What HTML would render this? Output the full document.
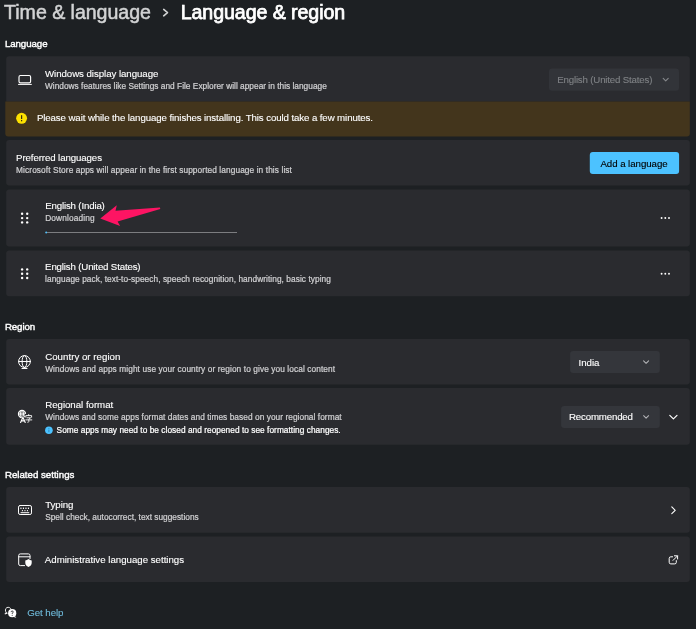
<!DOCTYPE html>
<html><head><meta charset="utf-8"><title>Language &amp; region</title><style>
html,body{margin:0;padding:0;}
body{width:696px;height:629px;overflow:hidden;background:#1d2023;position:relative;font-family:"Liberation Sans",sans-serif;}
svg{position:absolute;left:0;top:0;}
#tx{position:absolute;left:0;top:0;width:696px;height:629px;will-change:transform;}
.t{position:absolute;white-space:nowrap;line-height:1;}
</style></head><body>
<svg width="696" height="629" viewBox="0 0 696 629">
<path d="M6.2 101.5 V59.2 a3 3 0 0 1 3 -3 H686.8 a3 3 0 0 1 3 3 V101.5 Z" fill="#2a2b2f"/>
<path d="M5.3 101.5 H689.8 V133.5 a3 3 0 0 1 -3 3 H8.3 a3 3 0 0 1 -3 -3 Z" fill="#43351c"/>
<rect x="6.2" y="140" width="683.5999999999999" height="45.5" rx="3" fill="#2a2b2f" />
<rect x="6.2" y="189.5" width="683.5999999999999" height="57.0" rx="3" fill="#2a2b2f" />
<rect x="6.2" y="250.5" width="683.5999999999999" height="45.80000000000001" rx="3" fill="#2a2b2f" />
<rect x="6.2" y="339" width="683.5999999999999" height="45.5" rx="3" fill="#2a2b2f" />
<rect x="6.2" y="388" width="683.5999999999999" height="56.80000000000001" rx="3" fill="#2a2b2f" />
<rect x="6.2" y="487" width="683.5999999999999" height="45.799999999999955" rx="3" fill="#2a2b2f" />
<rect x="6.2" y="536.5" width="683.5999999999999" height="45.5" rx="3" fill="#2a2b2f" />
<rect x="549" y="68.6" width="130" height="22.2" rx="3.2" fill="#323439" />
<rect x="570.1" y="351.0" width="89.7" height="21.9" rx="3.2" fill="#34363b" />
<rect x="561.1" y="406.1" width="98.7" height="21.8" rx="3.2" fill="#34363b" />
<rect x="589.8" y="152" width="89.3" height="22" rx="3" fill="#4cc2ff" />
<rect x="45.5" y="232.05" width="191.5" height="0.9" fill="#86878b"/>
<rect x="45.3" y="231.6" width="1.8" height="1.8" rx="0.9" fill="#4cc2ff"/>
<polygon points="100.3,218.4 116.8,205.2 115.5,210.7 159.9,207.5 160.3,208.9 117.6,221.5 120.1,226.1" fill="#fd1463"/>
<circle cx="22.1" cy="213.80" r="1.2" fill="#fff"/>
<circle cx="27.2" cy="213.80" r="1.2" fill="#fff"/>
<circle cx="22.1" cy="218.10" r="1.2" fill="#fff"/>
<circle cx="27.2" cy="218.10" r="1.2" fill="#fff"/>
<circle cx="22.1" cy="222.40" r="1.2" fill="#fff"/>
<circle cx="27.2" cy="222.40" r="1.2" fill="#fff"/>
<circle cx="22.1" cy="269.40" r="1.2" fill="#fff"/>
<circle cx="27.2" cy="269.40" r="1.2" fill="#fff"/>
<circle cx="22.1" cy="273.70" r="1.2" fill="#fff"/>
<circle cx="27.2" cy="273.70" r="1.2" fill="#fff"/>
<circle cx="22.1" cy="278.00" r="1.2" fill="#fff"/>
<circle cx="27.2" cy="278.00" r="1.2" fill="#fff"/>
<circle cx="661.6" cy="218.0" r="0.95" fill="#fff"/>
<circle cx="665.3000000000001" cy="218.0" r="0.95" fill="#fff"/>
<circle cx="669.0" cy="218.0" r="0.95" fill="#fff"/>
<circle cx="661.6" cy="273.7" r="0.95" fill="#fff"/>
<circle cx="665.3000000000001" cy="273.7" r="0.95" fill="#fff"/>
<circle cx="669.0" cy="273.7" r="0.95" fill="#fff"/>
<circle cx="21.6" cy="118.3" r="5.45" fill="#fce100"/>
<rect x="21.0" y="115.2" width="1.2" height="3.8" fill="#3a2d10"/><rect x="21.0" y="120.0" width="1.2" height="1.3" fill="#3a2d10"/>
<circle cx="48.9" cy="430.2" r="3.8" fill="#4cc2ff"/>
<rect x="48.5" y="429.6" width="0.8" height="2.6" fill="#2a7fae"/><rect x="48.5" y="428" width="0.8" height="0.9" fill="#2a7fae"/>
<rect x="19" y="75.5" width="11.6" height="7.4" rx="1.4" fill="none" stroke="#fff" stroke-width="1" stroke-linecap="round" stroke-linejoin="round" style="stroke-width:1.15"/><path d="M18.5 84.4 H31.4" fill="none" stroke="#fff" stroke-width="1" stroke-linecap="round" stroke-linejoin="round"/>
<circle cx="24.5" cy="361.5" r="5.9" fill="none" stroke="#fff" stroke-width="1" stroke-linecap="round" stroke-linejoin="round"/><ellipse cx="24.5" cy="361.5" rx="2.4" ry="5.9" fill="none" stroke="#fff" stroke-width="1" stroke-linecap="round" stroke-linejoin="round"/><path d="M18.6 361.5 H30.4 M24.5 367.4 V368.4 M22 368.5 H27" fill="none" stroke="#fff" stroke-width="1" stroke-linecap="round" stroke-linejoin="round"/>
<circle cx="22.0" cy="414.0" r="3.6" fill="rgba(255,255,255,0.35)" stroke="#fff" stroke-width="1.1"/><ellipse cx="22.0" cy="414.0" rx="1.5" ry="3.6" fill="none" stroke="#fff" stroke-width="0.9" stroke-linecap="round" stroke-linejoin="round"/><path d="M18.4 414.0 H25.6" fill="none" stroke="#fff" stroke-width="0.9" stroke-linecap="round" stroke-linejoin="round"/>
<path d="M20.6 422.6 L22.9 417.2 L25.2 422.6 Z" fill="#2a2b2f" stroke="#2a2b2f" stroke-width="1.8" stroke-linejoin="round"/>
<rect x="24.9" y="413.9" width="7.6" height="9.2" fill="#2a2b2f"/>
<path d="M20.6 422.5 L22.9 417.2 L25.2 422.5 M21.5 420.9 H24.3" fill="none" stroke="#fff" stroke-width="1.15" stroke-linejoin="round" stroke-linecap="round"/>
<path d="M28.7 414.5 V415.4 M25.8 417.2 V415.6 H31.6 V417.2 M27 417.8 H30.6 L28.8 419.3 V421.6 Q28.8 422.4 27.8 422.3 M25.8 419.9 H31.8" fill="none" stroke="#fff" stroke-width="0.9" stroke-linecap="round" stroke-linejoin="round"/>
<rect x="18.5" y="505.5" width="13" height="9" rx="1.6" fill="none" stroke="#fff" stroke-width="1" stroke-linecap="round" stroke-linejoin="round"/>
<g fill="#fff"><rect x="20.4" y="507.6" width="1.1" height="1.4"/><rect x="22.9" y="507.6" width="1.1" height="1.4"/><rect x="25.4" y="507.6" width="1.1" height="1.4"/><rect x="27.9" y="507.6" width="1.1" height="1.4"/><rect x="21.9" y="510.1" width="1.1" height="1.1"/><rect x="24.4" y="510.1" width="1.1" height="1.1"/><rect x="26.9" y="510.1" width="1.1" height="1.1"/><rect x="20.6" y="512.2" width="8.6" height="1"/></g>
<path d="M24.6 565.6 H20.3 a1.6 1.6 0 0 1 -1.6 -1.6 V555.5 a1.6 1.6 0 0 1 1.6 -1.6 H28.4 a1.6 1.6 0 0 1 1.6 1.6 V558.6 M18.7 556.8 H30" fill="none" stroke="#fff" stroke-width="1" stroke-linecap="round" stroke-linejoin="round"/>
<path d="M28.5 559.1 C27.4 560 26.3 560.3 25.3 560.4 V563 C25.3 565 26.7 566.2 28.5 567 C30.3 566.2 31.7 565 31.7 563 V560.4 C30.7 560.3 29.6 560 28.5 559.1 Z" fill="#fff"/>
<path d="M6.2 612.4 A3.0 3.0 0 1 1 11.2 609.5 M6.2 612.4 L4.9 614.0 L7.2 613.3" fill="none" stroke="#fff" stroke-width="0.9" stroke-linecap="round" stroke-linejoin="round"/>
<circle cx="12.2" cy="613.2" r="4.1" fill="#fff"/><path d="M14.8 616.1 L16.4 617.7 L13.6 617.1 Z" fill="#fff"/>
<path d="M11.1 612.1 Q11.1 611.0 12.2 611.0 Q13.3 611.0 13.3 612.0 Q13.3 612.7 12.2 613.3 V614.0" fill="none" stroke="#1d2023" stroke-width="0.8"/><circle cx="12.2" cy="615.3" r="0.5" fill="#1d2023"/>
<path d="M663.2 78.3 L665.7 80.8 L668.2 78.3" fill="none" stroke="#85878b" stroke-width="1.15" stroke-linecap="round" stroke-linejoin="round"/>
<path d="M643.6 360.8 L646.1 363.3 L648.6 360.8" fill="none" stroke="#b4b5b8" stroke-width="1.05" stroke-linecap="round" stroke-linejoin="round"/>
<path d="M643.6 415.7 L646.1 418.2 L648.6 415.7" fill="none" stroke="#b4b5b8" stroke-width="1.05" stroke-linecap="round" stroke-linejoin="round"/>
<path d="M669.8 415.3 L673.4 418.9 L677 415.3" fill="none" stroke="#fff" stroke-width="1.2" stroke-linecap="round" stroke-linejoin="round"/>
<path d="M671.8 506.9 L675.2 510.3 L671.8 513.7" fill="none" stroke="#fff" stroke-width="1.1" stroke-linecap="round" stroke-linejoin="round"/>
<path d="M163.7 9.4 L167.5 12.6 L163.7 15.8" fill="none" stroke="#d2d3d4" stroke-width="1.6" stroke-linecap="round" stroke-linejoin="round"/>
<path d="M672.6 556.8 H670.8 a1.6 1.6 0 0 0 -1.6 1.6 V562.3 a1.6 1.6 0 0 0 1.6 1.6 H674.7 a1.6 1.6 0 0 0 1.6 -1.6 V560.6 M674.4 555.8 H677.6 V559 M677.4 556 L673 560.4" fill="none" stroke="#fff" stroke-width="1" stroke-linecap="round" stroke-linejoin="round"/>
</svg>
<div id="tx">
<div class="t" style="left:4.10px;top:3.21px;font-size:19.6px;color:#d2d3d4;letter-spacing:-0.04px;-webkit-text-stroke:0.5px #d2d3d4">Time &amp; language</div>
<div class="t" style="left:180.70px;top:3.21px;font-size:19.6px;color:#ffffff;letter-spacing:-0.071px;-webkit-text-stroke:0.75px #ffffff">Language &amp; region</div>
<div class="t" style="left:4.90px;top:39.39px;font-size:9.7px;color:#ffffff;letter-spacing:-0.064px;-webkit-text-stroke:0.4px #ffffff">Language</div>
<div class="t" style="left:45.00px;top:69.19px;font-size:9.7px;color:#ffffff;letter-spacing:-0.059px;-webkit-text-stroke:0.12px #ffffff">Windows display language</div>
<div class="t" style="left:45.00px;top:81.77px;font-size:8.3px;color:#d0d0d2;letter-spacing:0.018px;-webkit-text-stroke:0.22px #d0d0d2">Windows features like Settings and File Explorer will appear in this language</div>
<div class="t" style="left:557.20px;top:74.99px;font-size:9.7px;color:#7e8084;letter-spacing:-0.173px;-webkit-text-stroke:0.12px #7e8084">English (United States)</div>
<div class="t" style="left:36.90px;top:113.39px;font-size:9.7px;color:#ffffff;letter-spacing:-0.103px;-webkit-text-stroke:0.12px #ffffff">Please wait while the language finishes installing. This could take a few minutes.</div>
<div class="t" style="left:16.10px;top:153.19px;font-size:9.7px;color:#ffffff;letter-spacing:-0.105px;-webkit-text-stroke:0.12px #ffffff">Preferred languages</div>
<div class="t" style="left:16.10px;top:165.77px;font-size:8.3px;color:#d0d0d2;letter-spacing:0.097px;-webkit-text-stroke:0.22px #d0d0d2">Microsoft Store apps will appear in the first supported language in this list</div>
<div class="t" style="left:600.40px;top:159.19px;font-size:9.7px;color:#000000;letter-spacing:-0.048px;-webkit-text-stroke:0.12px #000000">Add a language</div>
<div class="t" style="left:45.20px;top:201.09px;font-size:9.7px;color:#ffffff;letter-spacing:-0.163px;-webkit-text-stroke:0.12px #ffffff">English (India)</div>
<div class="t" style="left:45.20px;top:213.87px;font-size:8.3px;color:#d0d0d2;letter-spacing:0.147px;-webkit-text-stroke:0.22px #d0d0d2">Downloading</div>
<div class="t" style="left:45.10px;top:262.19px;font-size:9.7px;color:#ffffff;letter-spacing:-0.164px;-webkit-text-stroke:0.12px #ffffff">English (United States)</div>
<div class="t" style="left:45.10px;top:275.07px;font-size:8.3px;color:#d0d0d2;letter-spacing:0.065px;-webkit-text-stroke:0.22px #d0d0d2">language pack, text-to-speech, speech recognition, handwriting, basic typing</div>
<div class="t" style="left:4.90px;top:322.19px;font-size:9.7px;color:#ffffff;letter-spacing:-0.084px;-webkit-text-stroke:0.4px #ffffff">Region</div>
<div class="t" style="left:45.20px;top:351.79px;font-size:9.7px;color:#ffffff;letter-spacing:0.02px;-webkit-text-stroke:0.12px #ffffff">Country or region</div>
<div class="t" style="left:45.20px;top:365.27px;font-size:8.3px;color:#d0d0d2;letter-spacing:0.097px;-webkit-text-stroke:0.22px #d0d0d2">Windows and apps might use your country or region to give you local content</div>
<div class="t" style="left:578.50px;top:357.69px;font-size:9.7px;color:#ffffff;letter-spacing:-0.023px;-webkit-text-stroke:0.12px #ffffff">India</div>
<div class="t" style="left:45.20px;top:399.59px;font-size:9.7px;color:#ffffff;letter-spacing:-0.026px;-webkit-text-stroke:0.12px #ffffff">Regional format</div>
<div class="t" style="left:45.20px;top:412.67px;font-size:8.3px;color:#d0d0d2;letter-spacing:0.062px;-webkit-text-stroke:0.22px #d0d0d2">Windows and some apps format dates and times based on your regional format</div>
<div class="t" style="left:56.60px;top:426.07px;font-size:8.3px;color:#ffffff;letter-spacing:0.039px;-webkit-text-stroke:0.22px #ffffff">Some apps may need to be closed and reopened to see formatting changes.</div>
<div class="t" style="left:569.00px;top:412.39px;font-size:9.7px;color:#ffffff;letter-spacing:-0.173px;-webkit-text-stroke:0.12px #ffffff">Recommended</div>
<div class="t" style="left:4.90px;top:470.19px;font-size:9.7px;color:#ffffff;letter-spacing:0.002px;-webkit-text-stroke:0.4px #ffffff">Related settings</div>
<div class="t" style="left:45.20px;top:499.79px;font-size:9.7px;color:#ffffff;letter-spacing:-0.058px;-webkit-text-stroke:0.12px #ffffff">Typing</div>
<div class="t" style="left:45.20px;top:513.37px;font-size:8.3px;color:#d0d0d2;letter-spacing:0.009px;-webkit-text-stroke:0.22px #d0d0d2">Spell check, autocorrect, text suggestions</div>
<div class="t" style="left:44.80px;top:554.79px;font-size:9.7px;color:#ffffff;letter-spacing:-0.006px;-webkit-text-stroke:0.12px #ffffff">Administrative language settings</div>
<div class="t" style="left:27.30px;top:607.79px;font-size:9.7px;color:#70bbdb;letter-spacing:-0.066px;-webkit-text-stroke:0.12px #70bbdb">Get help</div>
</div>
</body></html>
